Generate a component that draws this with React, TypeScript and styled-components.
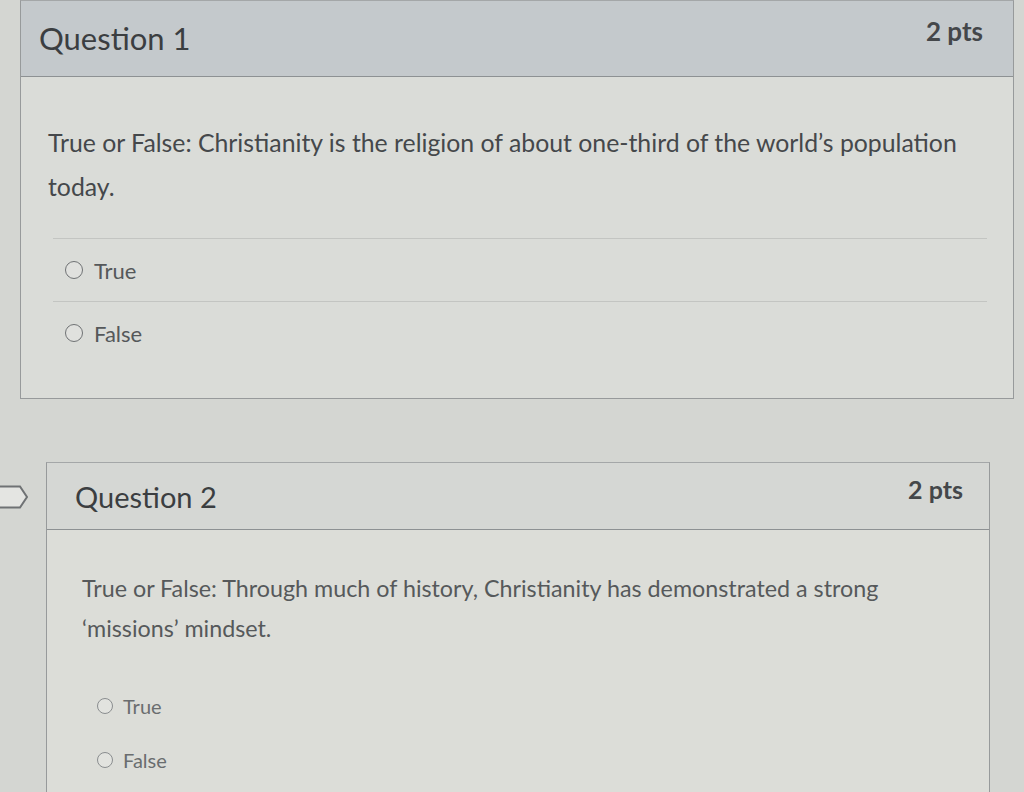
import React from "react";
import styled, { createGlobalStyle } from "styled-components";

const GlobalStyle = createGlobalStyle`
  html, body {
    margin: 0;
    padding: 0;
    background: #d4d6d2;
    font-family: Lato, "Open Sans", sans-serif;
    overflow: hidden;
  }
`;

const Page = styled.div`
  width: 1024px;
  height: 792px;
  display: flex;
  flex-direction: column;
  gap: 63px;
  background: #d4d6d2;
  overflow: hidden;
`;

const Row = styled.div`
  display: flex;
  align-items: flex-start;
  flex-shrink: 0;
`;

const Flag = styled.div`
  width: 46px;
  flex-shrink: 0;
  padding-top: 23px;
  svg {
    display: block;
    margin-left: -6px;
  }
`;

const Card = styled.div<{ $left: number; $right: number; $compact?: boolean }>`
  margin-left: ${(p) => p.$left}px;
  margin-right: ${(p) => p.$right}px;
  flex: 1;
  border: 1px solid #979a9b;
  border-top-color: #a4a7a8;
  background: ${(p) => (p.$compact ? "#dcddd8" : "#dadcd8")};
`;

const Header = styled.div<{ $compact?: boolean }>`
  height: ${(p) => (p.$compact ? 67 : 76)}px;
  display: flex;
  justify-content: space-between;
  align-items: ${(p) => (p.$compact ? "center" : "flex-start")};
  padding: ${(p) => (p.$compact ? "0 26px 0 28px" : "18px 30px 0 18px")};
  background: ${(p) => (p.$compact ? "#d5d7d4" : "#c4c9cc")};
  border-bottom: 1px solid #8d9193;
  color: #3b3e41;
  box-sizing: border-box;
`;

const Title = styled.h2<{ $compact?: boolean }>`
  margin: 0;
  font-size: ${(p) => (p.$compact ? 29 : 31)}px;
  font-weight: 400;
`;

const Points = styled.span<{ $compact?: boolean }>`
  font-size: ${(p) => (p.$compact ? 25 : 26)}px;
  font-weight: 700;
  color: #44474a;
  margin-top: ${(p) => (p.$compact ? -14 : -4)}px;
`;

const Body = styled.div<{ $compact?: boolean }>`
  padding: ${(p) => (p.$compact ? "38px 40px 60px 35px" : "44px 26px 34px 27px")};
`;

const Prompt = styled.p<{ $compact?: boolean }>`
  margin: 0;
  font-size: ${(p) => (p.$compact ? 23.3 : 24.8)}px;
  line-height: ${(p) => (p.$compact ? 40 : 44)}px;
  color: ${(p) => (p.$compact ? "#56595b" : "#45484b")};
  white-space: nowrap;
`;

const Answers = styled.div<{ $compact?: boolean }>`
  margin-top: ${(p) => (p.$compact ? 30 : 29)}px;
  padding-left: ${(p) => (p.$compact ? 15 : 5)}px;
`;

const Answer = styled.label<{ $compact?: boolean }>`
  display: flex;
  align-items: center;
  gap: ${(p) => (p.$compact ? 10 : 11)}px;
  height: ${(p) => (p.$compact ? 53 : 62)}px;
  padding-left: ${(p) => (p.$compact ? 0 : 12)}px;
  border-top: 1px solid ${(p) => (p.$compact ? "transparent" : "#c3c5c2")};
  font-size: ${(p) => (p.$compact ? 20 : 22)}px;
  color: ${(p) => (p.$compact ? "#6a6d6f" : "#55585a")};
`;

const Radio = styled.span<{ $compact?: boolean }>`
  width: ${(p) => (p.$compact ? 16 : 18)}px;
  height: ${(p) => (p.$compact ? 16 : 18)}px;
  border-radius: 50%;
  border: 1.5px solid ${(p) => (p.$compact ? "#8a8d8f" : "#6f7274")};
  background: ${(p) => (p.$compact ? "#e2e3df" : "#e0e1de")};
  box-sizing: border-box;
  flex-shrink: 0;
`;

type QuestionProps = {
  title: string;
  prompt: React.ReactNode;
  left: number;
  right: number;
  compact?: boolean;
};

function Question({ title, prompt, left, right, compact }: QuestionProps) {
  return (
    <Card $left={left} $right={right} $compact={compact}>
      <Header $compact={compact}>
        <Title $compact={compact}>{title}</Title>
        <Points $compact={compact}>2 pts</Points>
      </Header>
      <Body $compact={compact}>
        <Prompt $compact={compact}>{prompt}</Prompt>
        <Answers $compact={compact}>
          {["True", "False"].map((a) => (
            <Answer key={a} $compact={compact}>
              <Radio $compact={compact} />
              {a}
            </Answer>
          ))}
        </Answers>
      </Body>
    </Card>
  );
}

export default function App() {
  return (
    <Page>
      <GlobalStyle />
      <Row>
        <Question
          title="Question 1"
          left={20}
          right={10}
          prompt={
            <>
              True or False: Christianity is the religion of about one-third of the world’s population
              <br />
              today.
            </>
          }
        />
      </Row>
      <Row>
        <Flag>
          <svg width="36" height="24" viewBox="0 0 36 24">
            <polygon
              points="0,1.5 26,1.5 33,12 26,22.5 0,22.5"
              fill="#e4e5e2"
              stroke="#6f7274"
              strokeWidth="2"
            />
          </svg>
        </Flag>
        <Question
          title="Question 2"
          left={0}
          right={34}
          compact
          prompt={
            <>
              True or False: Through much of history, Christianity has demonstrated a strong
              <br />
              ‘missions’ mindset.
            </>
          }
        />
      </Row>
    </Page>
  );
}
